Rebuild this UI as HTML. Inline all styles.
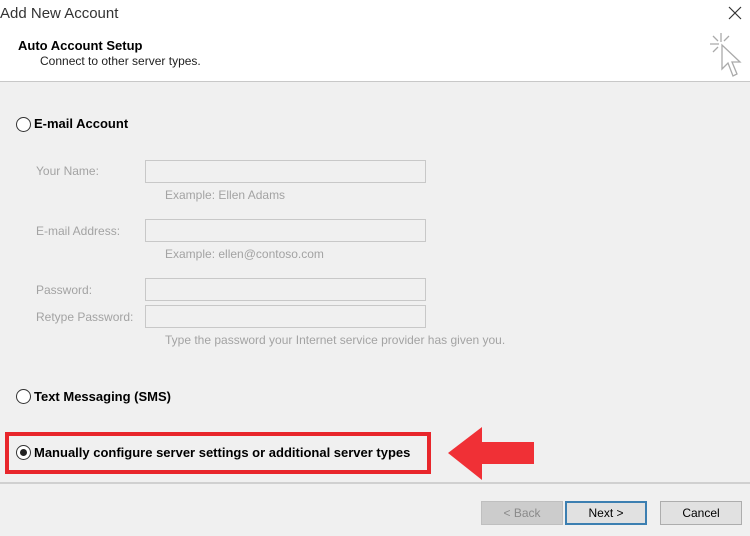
<!DOCTYPE html>
<html><head><style>
*{margin:0;padding:0;box-sizing:border-box}
body{width:750px;height:536px;position:relative;background:#f0f0f0;font-family:"Liberation Sans",sans-serif;overflow:hidden;color:#000}
.a{position:absolute;white-space:nowrap}
.g{color:#a3a3a3;font-size:12px}
.in{position:absolute;left:145px;width:281px;height:23px;border:1px solid #c8c8c8;background:#f0f0f0}
.r{position:absolute;width:15px;height:15px;border:1px solid #333;border-radius:50%;background:#fff}
.b{font-weight:bold;font-size:13px}
.btn{position:absolute;top:501px;height:24px;border:1px solid #adadad;background:#e1e1e1;font-size:12px;text-align:center;line-height:22px}
</style></head><body>
<div class="a" style="left:0;top:0;width:750px;height:82px;background:#fff;border-bottom:1px solid #c8c8c8"></div>
<div class="a" style="left:0;top:5px;font-size:15px;color:#333">Add New Account</div>
<svg class="a" style="left:728px;top:6px" width="14" height="14"><path d="M1 1L13 13M13 1L1 13" stroke="#333" stroke-width="1.2"/></svg>
<div class="a b" style="left:18px;top:38px;font-size:13px">Auto Account Setup</div>
<div class="a" style="left:40px;top:54px;font-size:12px;color:#222">Connect to other server types.</div>
<svg class="a" style="left:708px;top:32px" width="36" height="48" viewBox="0 0 36 48"><g stroke="#aaa" stroke-width="1.3" fill="none"><path d="M13 1v9M2 12h9M5 4l5 5M21 4l-5 5M5 20l5-5"/><path d="M14 13l0 24 6-6 5 13 4-2-5-12 8 0z" fill="#fff"/></g></svg>
<div class="r" style="left:16px;top:117px"></div>
<div class="a b" style="left:34px;top:116px">E-mail Account</div>
<div class="a g" style="left:36px;top:164px">Your Name:</div>
<div class="in" style="top:160px"></div>
<div class="a g" style="left:165px;top:188px">Example: Ellen Adams</div>
<div class="a g" style="left:36px;top:224px">E-mail Address:</div>
<div class="in" style="top:219px"></div>
<div class="a g" style="left:165px;top:247px">Example: ellen@contoso.com</div>
<div class="a g" style="left:36px;top:283px">Password:</div>
<div class="in" style="top:278px"></div>
<div class="a g" style="left:36px;top:310px">Retype Password:</div>
<div class="in" style="top:305px"></div>
<div class="a g" style="left:165px;top:333px">Type the password your Internet service provider has given you.</div>
<div class="r" style="left:16px;top:389px"></div>
<div class="a b" style="left:34px;top:389px">Text Messaging (SMS)</div>
<div class="a" style="left:5px;top:432px;width:426px;height:42px;border:4px solid #e8262b"></div>
<div class="r" style="left:16px;top:445px"><div style="position:absolute;left:3px;top:3px;width:7px;height:7px;border-radius:50%;background:#222"></div></div>
<div class="a b" style="left:34px;top:445px">Manually configure server settings or additional server types</div>
<svg class="a" style="left:446px;top:426px" width="90" height="56"><path d="M2 27L36 1V16H88V38H36V54Z" fill="#f03036"/></svg>
<div class="a" style="left:0;top:482px;width:750px;height:2px;background:#d0d0d0"></div>
<div class="btn" style="left:481px;width:82px;background:#ccc;border-color:#bfbfbf;color:#8a8a8a">&lt; Back</div>
<div class="btn" style="left:565px;width:82px;border:2px solid #3c7fb1;line-height:20px">Next &gt;</div>
<div class="btn" style="left:660px;width:82px">Cancel</div>
</body></html>
